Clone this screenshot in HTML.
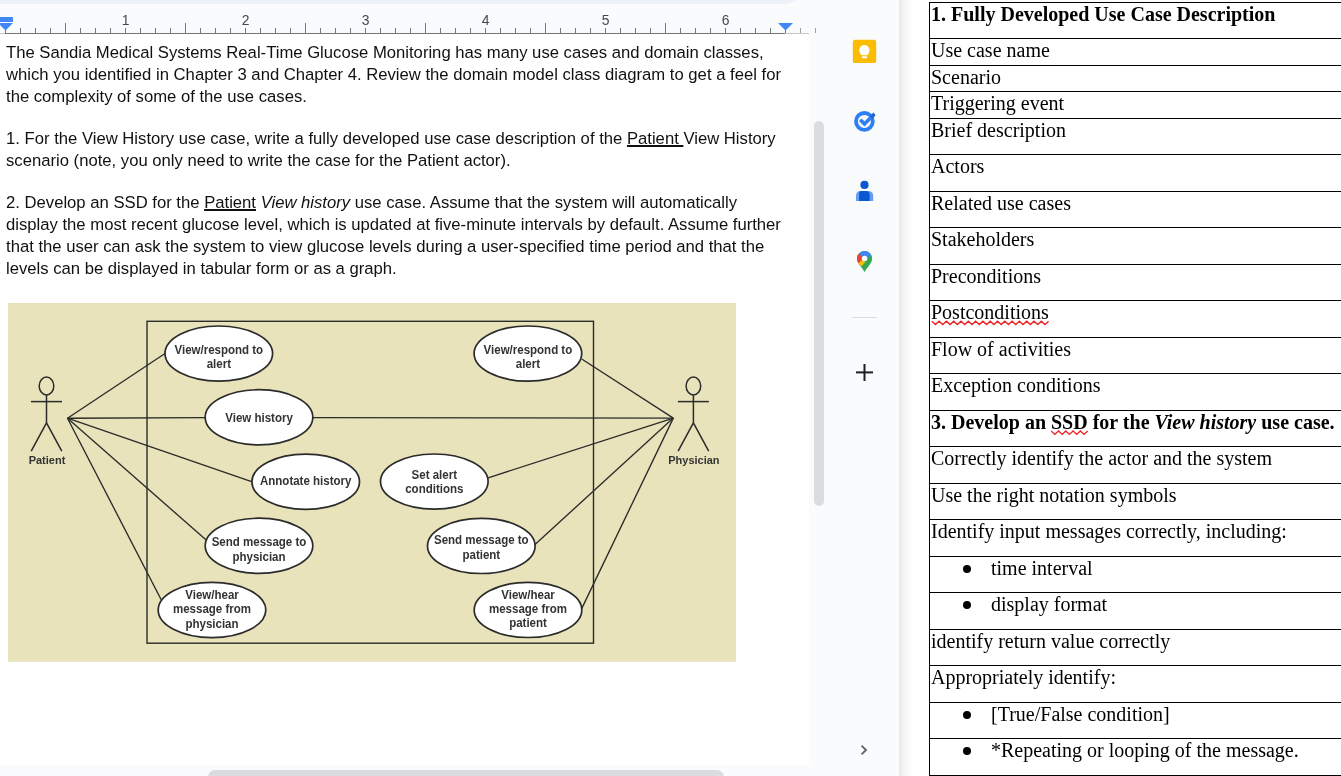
<!DOCTYPE html>
<html><head><meta charset="utf-8">
<style>
*{margin:0;padding:0;box-sizing:border-box}
html,body{width:1341px;height:776px;overflow:hidden;background:#f9fbfd;position:relative;font-family:"Liberation Sans",sans-serif}
.abs{position:absolute}
#topband{position:absolute;left:-40px;top:-40px;width:847px;height:44px;background:#edf2fa;border-radius:0 0 24px 24px}
#page{position:absolute;left:0;top:34px;width:809px;height:731px;background:#fff}
#text{position:absolute;left:6px;top:42px;width:790px;font-size:16.67px;line-height:21.9px;color:#111;white-space:nowrap;will-change:transform}
#text .gap{height:20.4px}
u{text-decoration:underline;text-decoration-thickness:1.7px;text-underline-offset:1.2px}
#vscroll{position:absolute;left:814px;top:121px;width:10px;height:385px;border-radius:5px;background:#dadce0}
#hscroll{position:absolute;left:208px;top:770px;width:516px;height:14px;border-radius:7px;background:#dadce0}
#right{position:absolute;left:899px;top:0;width:442px;height:776px;background:linear-gradient(to right,#e9e9e9 0px,#f6f6f6 6px,#fdfdfd 12px,#fff 16px)}
#tbl{position:absolute;left:0;top:0;width:1341px;height:776px;font-family:"Liberation Serif",serif;font-size:20px;color:#000}
#tbl .hl{position:absolute;left:929px;width:420px;height:1px;background:#000}
#tbl .vl{position:absolute;left:929px;top:2px;width:1px;height:774px;background:#000}
#tbl .t{position:absolute;left:931px;white-space:nowrap;line-height:23px;will-change:transform}
#tbl .bul{position:absolute;left:963.3px;width:8px;height:8px;border-radius:50%;background:#000}
.sq{text-decoration:underline wavy #e53935;text-decoration-thickness:1px;text-underline-offset:3px;text-decoration-skip-ink:none}
#diagram text{font-family:"Liberation Sans",sans-serif;font-weight:bold;font-size:12px;fill:#333}
</style></head><body>
<div id="topband"></div>
<div id="page"></div>
<svg class="abs" style="left:0;top:0;font-family:'Liberation Sans',sans-serif;will-change:transform" width="830" height="34" viewBox="0 0 830 34">
<rect x="0" y="33" width="5" height="1" fill="#c4c7c5"/>
<rect x="5" y="33" width="780" height="1" fill="#747775"/>
<rect x="785" y="33" width="24" height="1" fill="#c4c7c5"/>
<rect x="5" y="28" width="1" height="5" fill="#747775"/>
<rect x="20" y="28" width="1" height="5" fill="#747775"/>
<rect x="35" y="28" width="1" height="5" fill="#747775"/>
<rect x="50" y="28" width="1" height="5" fill="#747775"/>
<rect x="65" y="23" width="1" height="10" fill="#747775"/>
<rect x="80" y="28" width="1" height="5" fill="#747775"/>
<rect x="95" y="28" width="1" height="5" fill="#747775"/>
<rect x="110" y="28" width="1" height="5" fill="#747775"/>
<text x="125.5" y="24.8" font-size="13.9" text-anchor="middle" fill="#474747">1</text>
<rect x="125" y="28" width="1" height="5" fill="#747775"/>
<rect x="140" y="28" width="1" height="5" fill="#747775"/>
<rect x="155" y="28" width="1" height="5" fill="#747775"/>
<rect x="170" y="28" width="1" height="5" fill="#747775"/>
<rect x="185" y="23" width="1" height="10" fill="#747775"/>
<rect x="200" y="28" width="1" height="5" fill="#747775"/>
<rect x="215" y="28" width="1" height="5" fill="#747775"/>
<rect x="230" y="28" width="1" height="5" fill="#747775"/>
<text x="245.5" y="24.8" font-size="13.9" text-anchor="middle" fill="#474747">2</text>
<rect x="245" y="28" width="1" height="5" fill="#747775"/>
<rect x="260" y="28" width="1" height="5" fill="#747775"/>
<rect x="275" y="28" width="1" height="5" fill="#747775"/>
<rect x="290" y="28" width="1" height="5" fill="#747775"/>
<rect x="305" y="23" width="1" height="10" fill="#747775"/>
<rect x="320" y="28" width="1" height="5" fill="#747775"/>
<rect x="335" y="28" width="1" height="5" fill="#747775"/>
<rect x="350" y="28" width="1" height="5" fill="#747775"/>
<text x="365.5" y="24.8" font-size="13.9" text-anchor="middle" fill="#474747">3</text>
<rect x="365" y="28" width="1" height="5" fill="#747775"/>
<rect x="380" y="28" width="1" height="5" fill="#747775"/>
<rect x="395" y="28" width="1" height="5" fill="#747775"/>
<rect x="410" y="28" width="1" height="5" fill="#747775"/>
<rect x="425" y="23" width="1" height="10" fill="#747775"/>
<rect x="440" y="28" width="1" height="5" fill="#747775"/>
<rect x="455" y="28" width="1" height="5" fill="#747775"/>
<rect x="470" y="28" width="1" height="5" fill="#747775"/>
<text x="485.5" y="24.8" font-size="13.9" text-anchor="middle" fill="#474747">4</text>
<rect x="485" y="28" width="1" height="5" fill="#747775"/>
<rect x="500" y="28" width="1" height="5" fill="#747775"/>
<rect x="515" y="28" width="1" height="5" fill="#747775"/>
<rect x="530" y="28" width="1" height="5" fill="#747775"/>
<rect x="545" y="23" width="1" height="10" fill="#747775"/>
<rect x="560" y="28" width="1" height="5" fill="#747775"/>
<rect x="575" y="28" width="1" height="5" fill="#747775"/>
<rect x="590" y="28" width="1" height="5" fill="#747775"/>
<text x="605.5" y="24.8" font-size="13.9" text-anchor="middle" fill="#474747">5</text>
<rect x="605" y="28" width="1" height="5" fill="#747775"/>
<rect x="620" y="28" width="1" height="5" fill="#747775"/>
<rect x="635" y="28" width="1" height="5" fill="#747775"/>
<rect x="650" y="28" width="1" height="5" fill="#747775"/>
<rect x="665" y="23" width="1" height="10" fill="#747775"/>
<rect x="680" y="28" width="1" height="5" fill="#747775"/>
<rect x="695" y="28" width="1" height="5" fill="#747775"/>
<rect x="710" y="28" width="1" height="5" fill="#747775"/>
<text x="725.5" y="24.8" font-size="13.9" text-anchor="middle" fill="#474747">6</text>
<rect x="725" y="28" width="1" height="5" fill="#747775"/>
<rect x="740" y="28" width="1" height="5" fill="#747775"/>
<rect x="755" y="28" width="1" height="5" fill="#747775"/>
<rect x="770" y="28" width="1" height="5" fill="#747775"/>
<rect x="785" y="23" width="1" height="10" fill="#747775"/>
<rect x="800" y="28" width="1" height="5" fill="#9aa0a6"/>
<rect x="815" y="28" width="1" height="5" fill="#9aa0a6"/>
<rect x="0" y="17" width="13" height="5" fill="#4285f4"/>
<path d="M-2 23 L13 23 L5.5 30.5 Z" fill="#4285f4"/>
<path d="M778 23 L793 23 L785.5 30.5 Z" fill="#4285f4"/>
</svg>
<div id="text">
<div>The Sandia Medical Systems Real-Time Glucose Monitoring has many use cases and domain classes,</div>
<div>which you identified in Chapter 3 and Chapter 4. Review the domain model class diagram to get a feel for</div>
<div>the complexity of some of the use cases.</div>
<div class="gap"></div>
<div>1. For the View History use case, write a fully developed use case description of the <u>Patient </u>View History</div>
<div>scenario (note, you only need to write the case for the Patient actor).</div>
<div class="gap"></div>
<div>2. Develop an SSD for the <u>Patient</u> <i>View history</i> use case. Assume that the system will automatically</div>
<div>display the most recent glucose level, which is updated at five-minute intervals by default. Assume further</div>
<div>that the user can ask the system to view glucose levels during a user-specified time period and that the</div>
<div>levels can be displayed in tabular form or as a graph.</div>
</div>
<svg id="diagram" class="abs" style="left:0;top:0;will-change:transform" width="809" height="776" viewBox="0 0 809 776">
<rect x="8" y="303" width="728" height="358.8" fill="#e8e3ba"/>
<rect x="147" y="321.3" width="446.5" height="321.9" fill="none" stroke="#2b2b2b" stroke-width="1.4"/>
<line x1="67.5" y1="418.2" x2="165" y2="353.5" stroke="#2b2b2b" stroke-width="1.35"/>
<line x1="67.5" y1="418.2" x2="205.6" y2="417.6" stroke="#2b2b2b" stroke-width="1.35"/>
<line x1="67.5" y1="418.2" x2="251.6" y2="481.7" stroke="#2b2b2b" stroke-width="1.35"/>
<line x1="67.5" y1="418.2" x2="205.9" y2="539.8" stroke="#2b2b2b" stroke-width="1.35"/>
<line x1="67.5" y1="418.2" x2="161.2" y2="599.7" stroke="#2b2b2b" stroke-width="1.35"/>
<line x1="673.3" y1="418.1" x2="581.7" y2="359" stroke="#2b2b2b" stroke-width="1.35"/>
<line x1="673.3" y1="418.1" x2="312.6" y2="417.6" stroke="#2b2b2b" stroke-width="1.35"/>
<line x1="673.3" y1="418.1" x2="488.2" y2="477.8" stroke="#2b2b2b" stroke-width="1.35"/>
<line x1="673.3" y1="418.1" x2="535" y2="544.5" stroke="#2b2b2b" stroke-width="1.35"/>
<line x1="673.3" y1="418.1" x2="581.7" y2="608.6" stroke="#2b2b2b" stroke-width="1.35"/>
<ellipse cx="218.8" cy="353.6" rx="53.8" ry="27.6" fill="#fff" stroke="#2b2b2b" stroke-width="1.7"/><text transform="translate(218.8 354.2) scale(0.96 1)" text-anchor="middle">View/respond to</text><text transform="translate(218.8 368.3) scale(0.96 1)" text-anchor="middle">alert</text>
<ellipse cx="259" cy="417.3" rx="53.8" ry="27.6" fill="#fff" stroke="#2b2b2b" stroke-width="1.7"/><text transform="translate(259 421.9) scale(0.96 1)" text-anchor="middle">View history</text>
<ellipse cx="305.7" cy="481.8" rx="53.8" ry="27.6" fill="#fff" stroke="#2b2b2b" stroke-width="1.7"/><text transform="translate(305.7 485.2) scale(0.96 1)" text-anchor="middle">Annotate history</text>
<ellipse cx="434.3" cy="481.6" rx="53.8" ry="27.6" fill="#fff" stroke="#2b2b2b" stroke-width="1.7"/><text transform="translate(434.3 478.9) scale(0.96 1)" text-anchor="middle">Set alert</text><text transform="translate(434.3 493.3) scale(0.96 1)" text-anchor="middle">conditions</text>
<ellipse cx="259" cy="545.8" rx="53.8" ry="27.6" fill="#fff" stroke="#2b2b2b" stroke-width="1.7"/><text transform="translate(259 545.6) scale(0.96 1)" text-anchor="middle">Send message to</text><text transform="translate(259 561.1) scale(0.96 1)" text-anchor="middle">physician</text>
<ellipse cx="481.3" cy="545.9" rx="53.8" ry="27.6" fill="#fff" stroke="#2b2b2b" stroke-width="1.7"/><text transform="translate(481.3 544.2) scale(0.96 1)" text-anchor="middle">Send message to</text><text transform="translate(481.3 559.2) scale(0.96 1)" text-anchor="middle">patient</text>
<ellipse cx="212" cy="610" rx="53.8" ry="27.6" fill="#fff" stroke="#2b2b2b" stroke-width="1.7"/><text transform="translate(212 598.8) scale(0.96 1)" text-anchor="middle">View/hear</text><text transform="translate(212 613.2) scale(0.96 1)" text-anchor="middle">message from</text><text transform="translate(212 627.7) scale(0.96 1)" text-anchor="middle">physician</text>
<ellipse cx="528" cy="609.9" rx="53.8" ry="27.6" fill="#fff" stroke="#2b2b2b" stroke-width="1.7"/><text transform="translate(528 599.2) scale(0.96 1)" text-anchor="middle">View/hear</text><text transform="translate(528 613.2) scale(0.96 1)" text-anchor="middle">message from</text><text transform="translate(528 627.4) scale(0.96 1)" text-anchor="middle">patient</text>
<ellipse cx="527.9" cy="353.6" rx="53.8" ry="27.6" fill="#fff" stroke="#2b2b2b" stroke-width="1.7"/><text transform="translate(527.9 354.2) scale(0.96 1)" text-anchor="middle">View/respond to</text><text transform="translate(527.9 368.3) scale(0.96 1)" text-anchor="middle">alert</text>
<ellipse cx="46.5" cy="386" rx="7.3" ry="8.9" fill="none" stroke="#2b2b2b" stroke-width="1.5"/><line x1="31.0" y1="401.6" x2="62.0" y2="401.6" stroke="#2b2b2b" stroke-width="1.5"/><line x1="46.5" y1="394.9" x2="46.5" y2="422.8" stroke="#2b2b2b" stroke-width="1.5"/><path d="M31.2 451.2 L46.5 422.8 L61.8 451.2" fill="none" stroke="#2b2b2b" stroke-width="1.5"/><text transform="translate(47.0 463.6)" text-anchor="middle" style="font-size:11px">Patient</text>
<ellipse cx="693.4" cy="386" rx="7.3" ry="8.9" fill="none" stroke="#2b2b2b" stroke-width="1.5"/><line x1="677.9" y1="401.6" x2="708.9" y2="401.6" stroke="#2b2b2b" stroke-width="1.5"/><line x1="693.4" y1="394.9" x2="693.4" y2="422.8" stroke="#2b2b2b" stroke-width="1.5"/><path d="M678.1 451.2 L693.4 422.8 L708.6999999999999 451.2" fill="none" stroke="#2b2b2b" stroke-width="1.5"/><text transform="translate(693.9 463.6)" text-anchor="middle" style="font-size:11px">Physician</text>
</svg>
<div id="vscroll"></div>
<div id="hscroll"></div>
<!-- side panel icons -->
<svg class="abs" style="left:809px;top:0" width="90" height="776" viewBox="809 0 90 776">
 <rect x="852.8" y="39.7" width="23.4" height="23.4" rx="2.2" fill="#fbbc04"/>
 <path d="M859.3 50.2 A5.1 5.1 0 1 1 869.5 50.2 Q869.5 53.2 867.2 55.2 H861.6 Q859.3 53.2 859.3 50.2 Z" fill="#fff"/>
 <rect x="862" y="56.3" width="5" height="1.9" fill="#fff"/>
 <circle cx="864.4" cy="121.4" r="8.4" fill="none" stroke="#2e7ff4" stroke-width="3.8"/>
 <path d="M860.2 119.8 L864.5 123.9 L873.3 114.9" fill="none" stroke="#2e7ff4" stroke-width="3.6"/>
 <path d="M870.2 116.4 L873.2 112.6 L875.6 115 L872.4 119 Z" fill="#1967d2"/>
 <circle cx="864.5" cy="184.9" r="4.1" fill="#0b57d0"/>
 <path d="M856 200.9 V196 Q856 191 861 191 H868 Q873.2 191 873.2 196 V200.9 Z" fill="#669df6"/>
 <path d="M859.1 200.9 V193 Q859.1 191 861 191 H866 Q869.7 191 869.7 195 V200.9 Z" fill="#0b57d0"/>
 <g transform="translate(857,250.9) scale(0.63)">
  <path d="M12 0 C5.4 0 0 5.4 0 12 C0 19.5 8 26 12 33.5 C16 26 24 19.5 24 12 C24 5.4 18.6 0 12 0 Z" fill="#34a853"/>
  <path d="M3.3 4.2 L8.5 9.5 A5 5 0 0 0 7.5 15 L2.3 19.5 C0.8 17.2 0 14.8 0 12 C0 9 1.3 6.3 3.3 4.2 Z" fill="#ea4335"/>
  <path d="M2.3 19.5 L8.5 14 A5 5 0 0 0 14 17 L7 24.8 C5 22.8 3.4 21.2 2.3 19.5 Z" fill="#fbbc04"/>
  <path d="M3.3 4.2 C5.5 1.6 8.6 0 12 0 C16.5 0 20.3 2.3 22.4 5.9 L16.4 12.1 A5 5 0 0 0 8.5 9.5 Z" fill="#4285f4"/>
  <circle cx="12" cy="12" r="4.4" fill="#fff"/>
 </g>
 <rect x="852" y="317" width="25" height="1" fill="#dadce0"/>
 <rect x="856" y="371.4" width="17" height="2" fill="#1f1f1f"/>
 <rect x="863.5" y="364" width="2" height="17" fill="#1f1f1f"/>
 <path d="M861.6 745.6 L866 750 L861.6 754.4" fill="none" stroke="#5f6368" stroke-width="1.8"/>
</svg>
<div id="right"></div>
<div id="tbl">
<div class="vl"></div>
<div class="hl" style="top:2px"></div>
<div class="t" style="top:2.80px"><b>1. Fully Developed Use Case Description</b></div>
<div class="hl" style="top:38px"></div>
<div class="t" style="top:38.80px">Use case name</div>
<div class="hl" style="top:65px"></div>
<div class="t" style="top:65.80px">Scenario</div>
<div class="hl" style="top:91px"></div>
<div class="t" style="top:91.80px">Triggering event</div>
<div class="hl" style="top:118px"></div>
<div class="t" style="top:118.80px">Brief description</div>
<div class="hl" style="top:154px"></div>
<div class="t" style="top:154.80px">Actors</div>
<div class="hl" style="top:191px"></div>
<div class="t" style="top:191.80px">Related use cases</div>
<div class="hl" style="top:227px"></div>
<div class="t" style="top:227.80px">Stakeholders</div>
<div class="hl" style="top:264px"></div>
<div class="t" style="top:264.80px">Preconditions</div>
<div class="hl" style="top:300px"></div>
<div class="t" style="top:300.80px">Postconditions</div>
<div class="hl" style="top:337px"></div>
<div class="t" style="top:337.80px">Flow of activities</div>
<div class="hl" style="top:373px"></div>
<div class="t" style="top:373.80px">Exception conditions</div>
<div class="hl" style="top:410px"></div>
<div class="t" style="top:410.80px"><b>3. Develop an SSD for the <i>View history</i> use case.</b></div>
<div class="hl" style="top:446px"></div>
<div class="t" style="top:446.80px">Correctly identify the actor and the system</div>
<div class="hl" style="top:483px"></div>
<div class="t" style="top:483.80px">Use the right notation symbols</div>
<div class="hl" style="top:519px"></div>
<div class="t" style="top:519.80px">Identify input messages correctly, including:</div>
<div class="hl" style="top:556px"></div>
<div class="bul" style="top:565.00px"></div>
<div class="t" style="top:556.80px;left:990.6px">time interval</div>
<div class="hl" style="top:592px"></div>
<div class="bul" style="top:601.00px"></div>
<div class="t" style="top:592.80px;left:990.6px">display format</div>
<div class="hl" style="top:629px"></div>
<div class="t" style="top:629.80px">identify return value correctly</div>
<div class="hl" style="top:665px"></div>
<div class="t" style="top:665.80px">Appropriately identify:</div>
<div class="hl" style="top:702px"></div>
<div class="bul" style="top:711.00px"></div>
<div class="t" style="top:702.80px;left:990.6px">[True/False condition]</div>
<div class="hl" style="top:738px"></div>
<div class="bul" style="top:747.00px"></div>
<div class="t" style="top:738.80px;left:990.6px">*Repeating or looping of the message.</div>
<div class="hl" style="top:775px"></div>
<svg class="abs" style="left:0;top:0" width="1341" height="776"><polyline points="931.80,321.2 935.45,324.6 939.10,321.2 942.75,324.6 946.40,321.2 950.05,324.6 953.70,321.2 957.35,324.6 961.00,321.2 964.65,324.6 968.30,321.2 971.95,324.6 975.60,321.2 979.25,324.6 982.90,321.2 986.55,324.6 990.20,321.2 993.85,324.6 997.50,321.2 1001.15,324.6 1004.80,321.2 1008.45,324.6 1012.10,321.2 1015.75,324.6 1019.40,321.2 1023.05,324.6 1026.70,321.2 1030.35,324.6 1034.00,321.2 1037.65,324.6 1041.30,321.2 1044.95,324.6 1048.60,321.2" fill="none" stroke="#ee2222" stroke-width="1.3" stroke-linejoin="miter"/><polyline points="1051.20,431.0 1054.85,434.4 1058.50,431.0 1062.15,434.4 1065.80,431.0 1069.45,434.4 1073.10,431.0 1076.75,434.4 1080.40,431.0 1084.05,434.4 1087.70,431.0" fill="none" stroke="#ee2222" stroke-width="1.3" stroke-linejoin="miter"/></svg>
</div>
</body></html>
